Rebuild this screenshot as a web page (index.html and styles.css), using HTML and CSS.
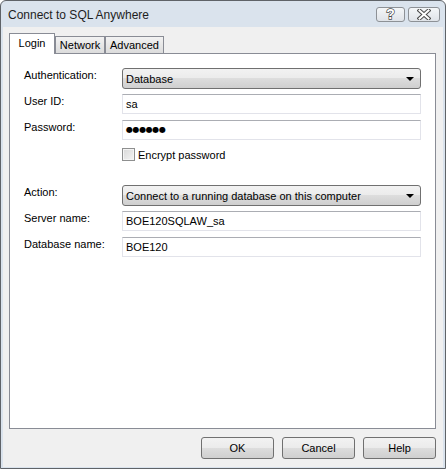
FILE: index.html
```html
<!DOCTYPE html>
<html>
<head>
<meta charset="utf-8">
<link rel="stylesheet" href="styles.css">
</head>
<body>
<div class="window">
  <div class="titlebar">
    <span class="title">Connect to SQL Anywhere</span>
    <div class="tbtns">
      <span class="tbtn help">?</span>
      <span class="tbtn close">
        <svg width="14" height="11" viewBox="0 0 14 11">
          <path d="M2.5 1.5 L11.5 9.5 M11.5 1.5 L2.5 9.5" stroke="#4a4a4a" stroke-width="4" stroke-linecap="square" fill="none"/>
          <path d="M2.5 1.5 L11.5 9.5 M11.5 1.5 L2.5 9.5" stroke="#ffffff" stroke-width="2" stroke-linecap="square" fill="none"/>
        </svg>
      </span>
    </div>
  </div>
  <div class="client">
    <div class="tabs">
      <div class="tab active t-login">Login</div>
      <div class="tab t-network">Network</div>
      <div class="tab t-advanced">Advanced</div>
    </div>
    <div class="panel">
      <div class="row r-first">
        <span class="label">Authentication:</span>
        <div class="combo"><span class="ctext">Database</span><span class="arrow"></span></div>
      </div>
      <div class="row r-gap5">
        <span class="label">User ID:</span>
        <div class="input">sa</div>
      </div>
      <div class="row r-gap6">
        <span class="label">Password:</span>
        <div class="input pw">●●●●●●</div>
      </div>
      <div class="checkrow">
        <span class="checkbox"></span>
        <span class="cblabel">Encrypt password</span>
      </div>
      <div class="row r-action">
        <span class="label">Action:</span>
        <div class="combo"><span class="ctext">Connect to a running database on this computer</span><span class="arrow"></span></div>
      </div>
      <div class="row r-gap5">
        <span class="label">Server name:</span>
        <div class="input">BOE120SQLAW_sa</div>
      </div>
      <div class="row r-gap6">
        <span class="label">Database name:</span>
        <div class="input">BOE120</div>
      </div>
    </div>
    <div class="buttons">
      <div class="btn">OK</div>
      <div class="btn">Cancel</div>
      <div class="btn">Help</div>
    </div>
  </div>
</div>
</body>
</html>
```
FILE: styles.css
```css
* { box-sizing: border-box; }
html, body { margin: 0; padding: 0; }
body {
  width: 446px;
  height: 469px;
  overflow: hidden;
  background: #ffffff;
  font-family: "Liberation Sans", Arial, sans-serif;
  font-size: 11px;
  color: #000;
}
.window {
  width: 446px;
  height: 469px;
  border: 1px solid #5f6368;
  border-radius: 6px 6px 0 0;
  background: #dae3ed;
  padding: 0 2px 1px 2px;
  display: flex;
  flex-direction: column;
}
.titlebar {
  height: 26px;
  flex: none;
  display: flex;
  align-items: flex-start;
  justify-content: space-between;
  padding: 0 3px 0 5px;
}
.title {
  font-size: 12px;
  color: #1e1e1e;
  line-height: 14px;
  margin-top: 7px;
}
.tbtns {
  display: flex;
  gap: 3px;
  margin-top: 6px;
}
.tbtn {
  height: 15px;
  border: 1px solid #8d9196;
  border-radius: 3px;
  background: linear-gradient(#f4f6f8, #dfe3e8);
  display: flex;
  align-items: center;
  justify-content: center;
}
.help {
  width: 29px;
  font-family: "Liberation Sans", sans-serif;
  font-weight: bold;
  font-size: 14px;
  line-height: 13px;
  color: #ffffff;
  -webkit-text-stroke: 1.4px #4a4a4a;
  paint-order: stroke fill;
}
.close {
  width: 32px;
}
.close svg { display: block; }
.client {
  flex: 1;
  background: #f0f0f0;
  padding: 6px 7px 8px 6px;
  display: flex;
  flex-direction: column;
}
.tabs {
  height: 20px;
  display: flex;
  align-items: flex-end;
  position: relative;
  z-index: 1;
}
.tab {
  height: 17px;
  border: 1px solid #898c95;
  border-bottom: none;
  background: linear-gradient(#f2f2f2, #dcdcdc);
  text-align: center;
  line-height: 14px;
  padding-top: 1px;
}
.tab.active {
  height: 21px;
  margin-bottom: -1px;
  background: #ffffff;
  padding-top: 2px;
}
.t-login { width: 46px; }
.t-network { width: 50px; }
.t-advanced { width: 59px; }
.panel {
  height: 376px;
  flex: none;
  border: 1px solid #898c95;
  background: #ffffff;
  padding: 14px 14px 0 14px;
  display: flex;
  flex-direction: column;
}
.row {
  display: flex;
  align-items: flex-start;
}
.label {
  width: 98px;
  flex: none;
  line-height: 14px;
}
.r-gap5 { margin-top: 5px; }
.r-gap6 { margin-top: 6px; }
.r-action { margin-top: 24px; }
.combo {
  flex: 1;
  height: 21px;
  border: 1px solid #707070;
  border-radius: 3px;
  background: linear-gradient(#f2f2f2 0%, #ebebeb 50%, #dddddd 50%, #cfcfcf 100%);
  display: flex;
  align-items: center;
  justify-content: space-between;
  padding: 0 6px 0 3px;
}
.ctext { line-height: 14px; }
.arrow {
  width: 0;
  height: 0;
  border-left: 4px solid transparent;
  border-right: 4px solid transparent;
  border-top: 4px solid #000;
}
.input {
  flex: 1;
  height: 20px;
  border: 1px solid #e2e3ea;
  border-top-color: #abadb3;
  background: #ffffff;
  line-height: 18px;
  padding-left: 3px;
}
.input.pw {
  font-family: "DejaVu Sans", sans-serif;
  font-size: 8px;
  letter-spacing: -0.4px;
}
.checkrow {
  display: flex;
  align-items: center;
  margin-top: 8px;
  margin-left: 98px;
  height: 13px;
}
.checkbox {
  width: 13px;
  height: 13px;
  border: 1px solid #8e8f8f;
  background: linear-gradient(135deg, #d8d8d8, #f4f4f4);
  box-shadow: inset 0 0 0 1px #f4f4f4;
}
.cblabel {
  margin-left: 3px;
  line-height: 14px;
}
.buttons {
  margin-top: 8px;
  display: flex;
  justify-content: flex-end;
  gap: 8px;
}
.btn {
  width: 73px;
  height: 22px;
  border: 1px solid #707070;
  border-radius: 3px;
  background: linear-gradient(#f2f2f2 0%, #ebebeb 50%, #dddddd 50%, #cfcfcf 100%);
  text-align: center;
  line-height: 20px;
}
```
